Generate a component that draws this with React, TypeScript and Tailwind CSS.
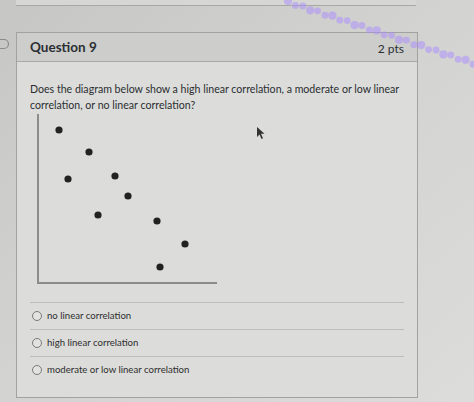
import React from 'react';

const dots: [number, number][] = [
  [30, 17], [60, 39], [39, 66], [86, 63], [99, 83], [69, 102], [128, 108], [156, 131], [131, 154],
];

const options = ['no linear correlation', 'high linear correlation', 'moderate or low linear correlation'];

const glare = Array.from({ length: 26 }, (_, i) => ({
  x: 288 + i * 7.4,
  y: 1 + i * 2.45 + (i % 2 === 0 ? 0 : 2),
  r: 3.4 + (i % 3 === 0 ? 0.7 : 0),
}));

export default function App() {
  return (
    <div
      className="relative w-[474px] h-[402px] overflow-hidden bg-gradient-to-br from-[#c6c6c4] via-[#d3d3d1] to-[#dcdcda] text-[#2f3437]"
      style={{ fontFamily: 'Lato, "Open Sans", sans-serif' }}
    >
      <div className="ml-[16px] w-[400px] h-[6px] bg-[#d6d6d4] border-b border-[#a8a8a6]" />

      <div className="flex mt-[26px]">
        <div className="w-[16px] shrink-0 pt-[6px]">
          <svg width="10" height="12" viewBox="0 0 10 12">
            <path d="M-4 1.5 H4 A4.5 4.5 0 0 1 4 10.5 H-4" fill="none" stroke="#8a8a88" strokeWidth="1.2" />
          </svg>
        </div>

        <div className="w-[402px] border border-[#a2a2a0]">
          <div className="h-[29px] bg-[#cdcdcb] border-b border-[#a8a8a6] flex items-center justify-between pl-[13px] pr-[13px]">
            <span className="text-[13.5px] font-bold text-[#2b2f33]">Question 9</span>
            <span className="text-[12px] text-[#2b2f33] mt-[3px]">2 pts</span>
          </div>

          <div className="bg-[#dcdcda] pl-[13px] pr-[8px] pt-[19px] pb-[14px]">
            <p className="text-[10.6px] leading-[16px] text-[#2a2e31]">
              Does the diagram below show a high linear correlation, a moderate or low linear correlation, or no linear correlation?
            </p>

            <svg width="250" height="172" viewBox="0 0 250 172" className="block -ml-[1px]">
              <line x1="9" y1="1" x2="9" y2="170" stroke="#8c8c8a" strokeWidth="2" />
              <line x1="8" y1="170" x2="188" y2="170" stroke="#8c8c8a" strokeWidth="2" />
              {dots.map(([x, y], i) => (
                <circle key={i} cx={x} cy={y} r="3.6" fill="#222" />
              ))}
              <path d="M228 14 L228 24 L230.5 21.5 L232.5 26 L234 25.3 L232 20.8 L235.5 20.8 Z" fill="#333" />
            </svg>

            <div className="mt-[17px] mr-[5px]">
              {options.map((o) => (
                <div key={o} className="h-[27px] border-t border-[#bdbdbb] flex items-center">
                  <span className="w-[10px] h-[10px] rounded-full border border-[#7a7a78] bg-[#e2e2e0] ml-[2px] mr-[5px]" />
                  <span className="text-[9.6px] text-[#2e2e2e]">{o}</span>
                </div>
              ))}
            </div>
          </div>
        </div>
      </div>

      <svg className="absolute top-0 left-0 pointer-events-none" width="474" height="402">
        {glare.map((g, i) => (
          <circle key={i} cx={g.x} cy={g.y} r={g.r} fill="#a98bff" opacity="0.5" />
        ))}
      </svg>
    </div>
  );
}
